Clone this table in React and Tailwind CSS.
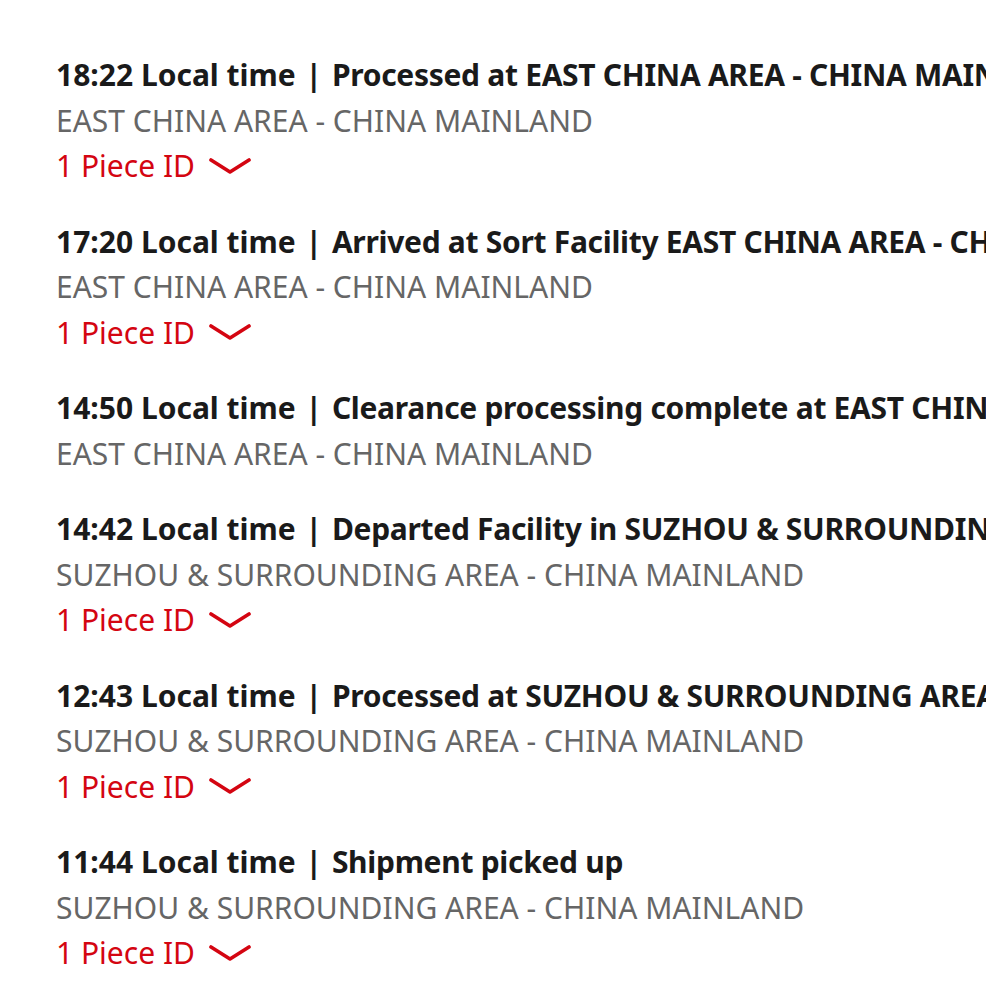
const events = [
  {
    time: '18:22',
    title: 'Processed at EAST CHINA AREA - CHINA MAINLAND',
    location: 'EAST CHINA AREA - CHINA MAINLAND',
    pieces: true,
  },
  {
    time: '17:20',
    title: 'Arrived at Sort Facility EAST CHINA AREA - CHINA MAINLAND',
    location: 'EAST CHINA AREA - CHINA MAINLAND',
    pieces: true,
  },
  {
    time: '14:50',
    title: 'Clearance processing complete at EAST CHINA AREA - CHINA MAINLAND',
    location: 'EAST CHINA AREA - CHINA MAINLAND',
    pieces: false,
  },
  {
    time: '14:42',
    title: 'Departed Facility in SUZHOU & SURROUNDING AREA - CHINA MAINLAND',
    location: 'SUZHOU & SURROUNDING AREA - CHINA MAINLAND',
    pieces: true,
  },
  {
    time: '12:43',
    title: 'Processed at SUZHOU & SURROUNDING AREA - CHINA MAINLAND',
    location: 'SUZHOU & SURROUNDING AREA - CHINA MAINLAND',
    pieces: true,
  },
  {
    time: '11:44',
    title: 'Shipment picked up',
    location: 'SUZHOU & SURROUNDING AREA - CHINA MAINLAND',
    pieces: true,
  },
];

const Chevron = () => (
  <svg width="42" height="20" viewBox="0 0 42 20" fill="none" className="ml-3.5">
    <path d="M2 4 L21 16 L40 4" stroke="#d40511" strokeWidth="3.6" strokeLinecap="round" strokeLinejoin="round" />
  </svg>
);

export default function App() {
  return (
    <div className="w-[986px] h-[1000px] overflow-hidden bg-white pl-14 pt-[52px] font-['Noto_Sans',sans-serif] text-[30px] leading-[45.5px]">
      <div className="flex flex-col gap-[30px]">
        {events.map((ev, i) => (
          <div key={i} className="flex flex-col whitespace-nowrap">
            <div className="font-bold text-[#1a1a1a]">
              {ev.time} Local time <span className="mx-0.5">|</span>{' '}
              <span className="tracking-[-0.3px]">{ev.title}</span>
            </div>
            <div className="text-[#666666]">{ev.location}</div>
            {ev.pieces && (
              <div className="flex items-center text-[#d40511]">
                <span>1 Piece ID</span>
                <Chevron />
              </div>
            )}
          </div>
        ))}
      </div>
    </div>
  );
}
